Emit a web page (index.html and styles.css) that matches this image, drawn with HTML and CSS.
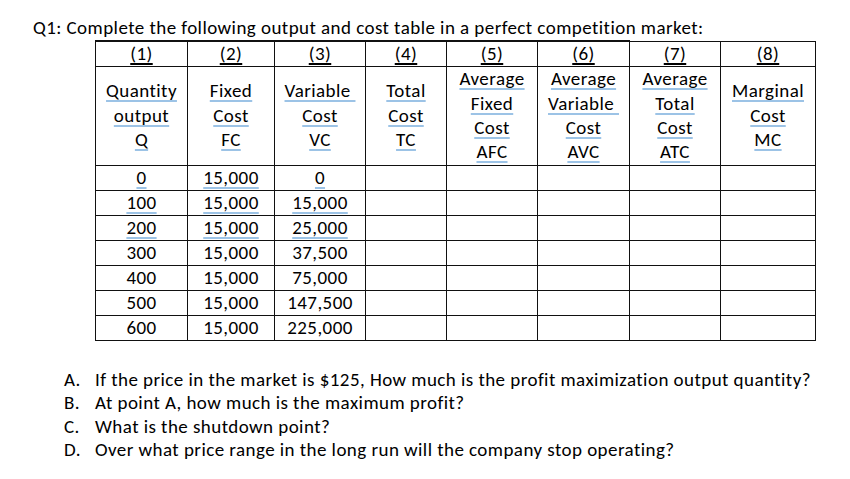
FILE: index.html
```html
<!DOCTYPE html>
<html>
<head>
<meta charset="utf-8">
<link rel="stylesheet" href="styles.css">
</head>
<body>
<h1 class="title">Q1: Complete the following output and cost table in a perfect competition market:</h1>
<table class="cost-table">
  <colgroup>
    <col class="c1"><col class="c2"><col class="c3"><col class="c4">
    <col class="c5"><col class="c6"><col class="c7"><col class="c8">
  </colgroup>
  <tr class="num-row">
    <td class="thick"><span class="num">(1)</span></td>
    <td class="thick"><span class="num">(2)</span></td>
    <td class="thick"><span class="num">(3)</span></td>
    <td class="thick"><span class="num">(4)</span></td>
    <td class="thick"><span class="num">(5)</span></td>
    <td class="thick"><span class="num">(6)</span></td>
    <td><span class="num">(7)</span></td>
    <td><span class="num">(8)</span></td>
  </tr>
  <tr class="head-row">
    <td><span class="u">Quantity</span><br><span class="u">output</span><br><span class="u">Q</span></td>
    <td><span class="u">Fixed</span><br><span class="u">Cost</span><br><span class="u">FC</span></td>
    <td><span class="u">Variable&nbsp;</span><br><span class="u">Cost</span><br><span class="u">VC</span></td>
    <td><span class="u">Total</span><br><span class="u">Cost</span><br><span class="u">TC</span></td>
    <td><span class="u">Average</span><br><span class="u">Fixed</span><br><span class="u">Cost</span><br><span class="u">AFC</span></td>
    <td><span class="u">Average</span><br><span class="u">Variable&nbsp;</span><br><span class="u">Cost</span><br><span class="u">AVC</span></td>
    <td><span class="u">Average</span><br><span class="u">Total</span><br><span class="u">Cost</span><br><span class="u">ATC</span></td>
    <td><span class="u">Marginal</span><br><span class="u">Cost</span><br><span class="u">MC</span></td>
  </tr>
  <tr class="data-row"><td><span class="u">0</span></td><td><span class="u">15,000</span></td><td><span class="u">0</span></td><td></td><td></td><td></td><td></td><td></td></tr>
  <tr class="data-row"><td><span class="u">100</span></td><td><span class="u">15,000</span></td><td><span class="u">15,000</span></td><td></td><td></td><td></td><td></td><td></td></tr>
  <tr class="data-row"><td><span class="u">200</span></td><td><span class="u">15,000</span></td><td><span class="u">25,000</span></td><td></td><td></td><td></td><td></td><td></td></tr>
  <tr class="data-row"><td>300</td><td>15,000</td><td>37,500</td><td></td><td></td><td></td><td></td><td></td></tr>
  <tr class="data-row"><td>400</td><td>15,000</td><td>75,000</td><td></td><td></td><td></td><td></td><td></td></tr>
  <tr class="data-row"><td>500</td><td>15,000</td><td>147,500</td><td></td><td></td><td></td><td></td><td></td></tr>
  <tr class="data-row"><td>600</td><td>15,000</td><td>225,000</td><td></td><td></td><td></td><td></td><td></td></tr>
</table>
<div class="questions">
  <div class="q"><span class="mark">A.</span><span>If the price in the market is $125, How much is the profit maximization output quantity?</span></div>
  <div class="q"><span class="mark">B.</span><span>At point A, how much is the maximum profit?</span></div>
  <div class="q"><span class="mark">C.</span><span>What is the shutdown point?</span></div>
  <div class="q"><span class="mark">D.</span><span>Over what price range in the long run will the company stop operating?</span></div>
</div>
</body>
</html>
```

FILE: styles.css
```css
html, body {
  margin: 0;
  padding: 0;
  background: #fff;
}
body {
  font-family: Carlito, Calibri, Lato, "Liberation Sans", sans-serif;
  font-size: 19px;
  letter-spacing: 0.44px;
  color: #000;
}
.title {
  font-size: 19px;
  font-weight: normal;
  line-height: 22px;
  margin: 17px 0 0 33px;
  padding: 0;
  white-space: nowrap;
}
.cost-table {
  margin: 1px 0 0 95px;
  border-collapse: collapse;
  table-layout: fixed;
  width: 720px;
}
.c1 { width: 92px; }
.c2 { width: 87px; }
.c3 { width: 91px; }
.c4 { width: 81px; }
.c5 { width: 91px; }
.c6 { width: 92px; }
.c7 { width: 91px; }
.c8 { width: 95px; }
.cost-table td {
  border: 1px solid #111;
  padding: 0;
  text-align: center;
  vertical-align: middle;
  white-space: nowrap;
}
.cost-table td.thick {
  border-top: 2px solid #111;
}
.num-row td {
  height: 24px;
  line-height: 22px;
}
.num {
  text-decoration: underline;
  text-decoration-thickness: 2px;
  text-underline-offset: 3px;
}
.head-row td {
  height: 98px;
  line-height: 24.4px;
}
.data-row td {
  height: 24px;
  line-height: 22px;
}
.u {
  text-decoration: underline;
  text-decoration-color: #9cc3e6;
  text-decoration-thickness: 1.5px;
  text-underline-offset: 3px;
}
.questions {
  margin: 27px 0 0 64px;
}
.q {
  display: flex;
  line-height: 23.4px;
  white-space: nowrap;
}
.mark {
  width: 31px;
  flex: none;
}
```
